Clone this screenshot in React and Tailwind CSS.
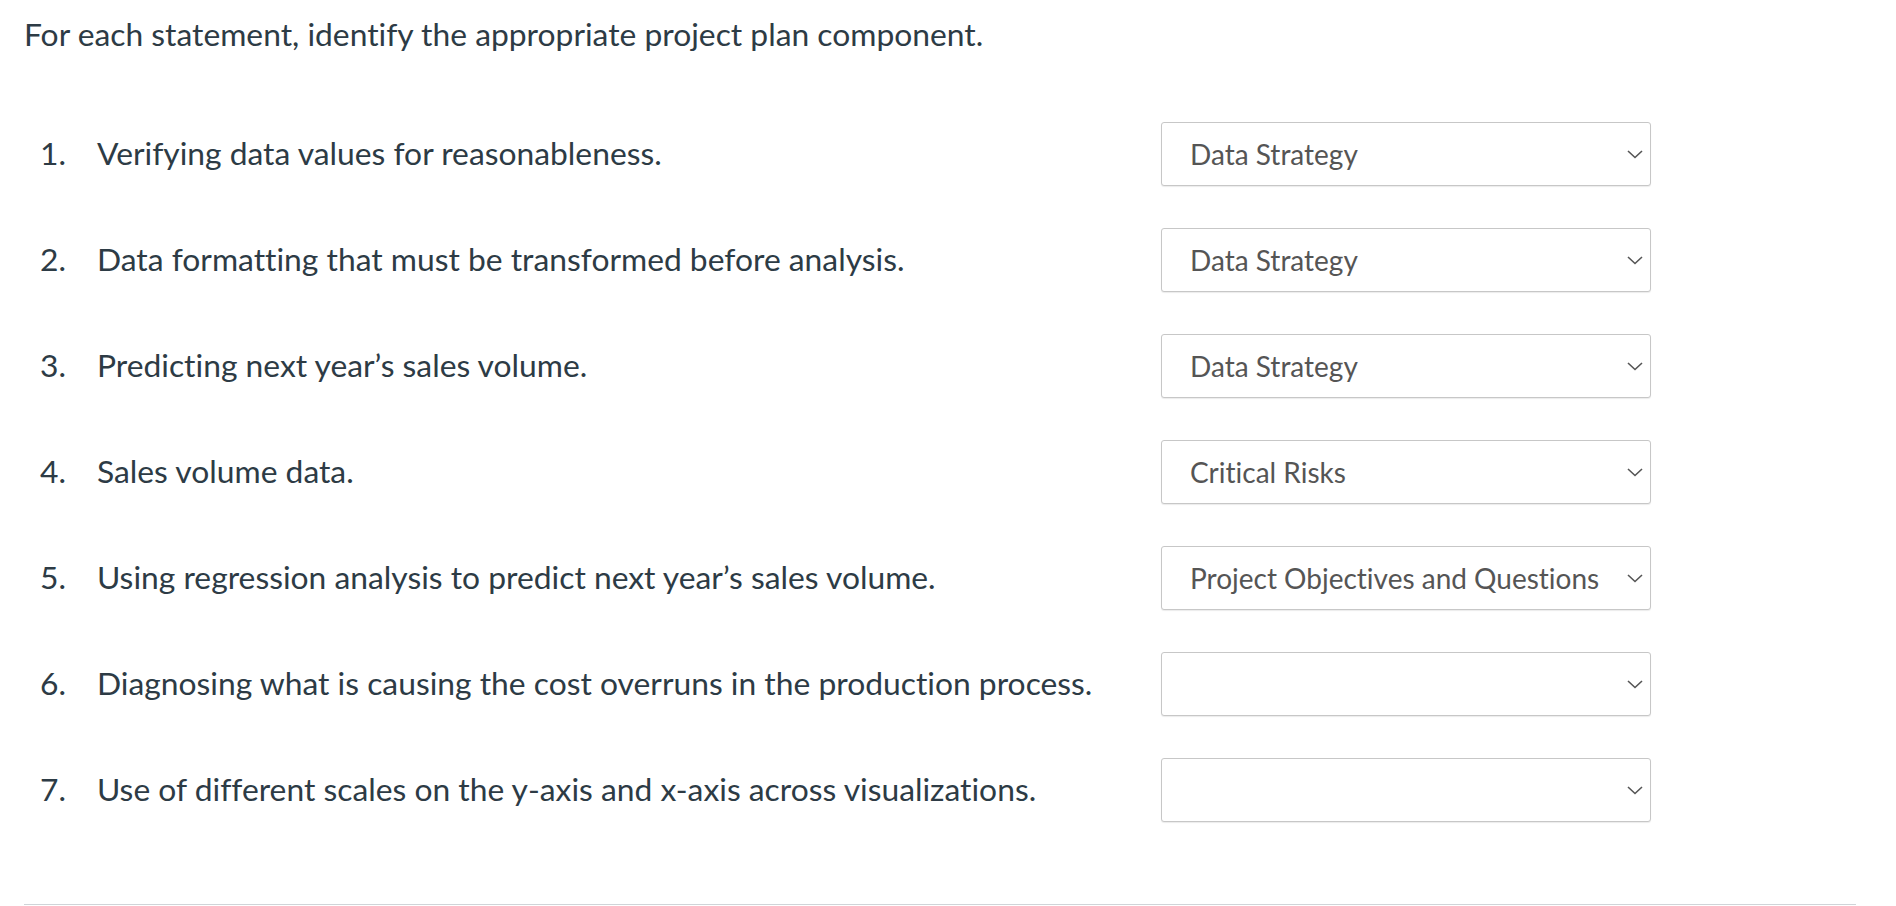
const items = [
  { text: "Verifying data values for reasonableness.", value: "Data Strategy" },
  { text: "Data formatting that must be transformed before analysis.", value: "Data Strategy" },
  { text: "Predicting next year\u2019s sales volume.", value: "Data Strategy" },
  { text: "Sales volume data.", value: "Critical Risks" },
  { text: "Using regression analysis to predict next year\u2019s sales volume.", value: "Project Objectives and Questions" },
  { text: "Diagnosing what is causing the cost overruns in the production process.", value: "" },
  { text: "Use of different scales on the y-axis and x-axis across visualizations.", value: "" },
];

const Chevron = () => (
  <svg width="16" height="9" viewBox="0 0 16 9" fill="none" className="shrink-0">
    <path d="M1 1l7 6.5L15 1" stroke="#555" strokeWidth="1.6" />
  </svg>
);

const App = () => {
  return (
    <main className="min-h-screen bg-white font-['Lato',sans-serif] text-[#2d3b45] [font-variant-ligatures:none]">
      <div className="pl-6 pr-10 pt-3">
        <p className="text-[31.8px] leading-[45px]">
          For each statement, identify the appropriate project plan component.
        </p>

        <div className="mt-[44px]">
          {items.map((item, i) => (
            <div key={i} className="flex items-center h-[106px]">
              <span className="w-[73px] pl-4 text-[31.8px]">{i + 1}.</span>
              <span className="w-[1064px] text-[31.8px]">{item.text}</span>
              <div className="w-[490px] h-[64px] flex items-center justify-between pl-[28px] pr-[7px] bg-white border border-[#c7c7c7] rounded-[3px] shadow-[0_1px_1px_rgba(0,0,0,0.08)]">
                <span className="text-[28px] text-[#555]">{item.value}</span>
                <Chevron />
              </div>
            </div>
          ))}
        </div>

        <div className="mt-[61px] border-t border-[#d0d4d8]" />
      </div>
    </main>
  );
};

export default App;
